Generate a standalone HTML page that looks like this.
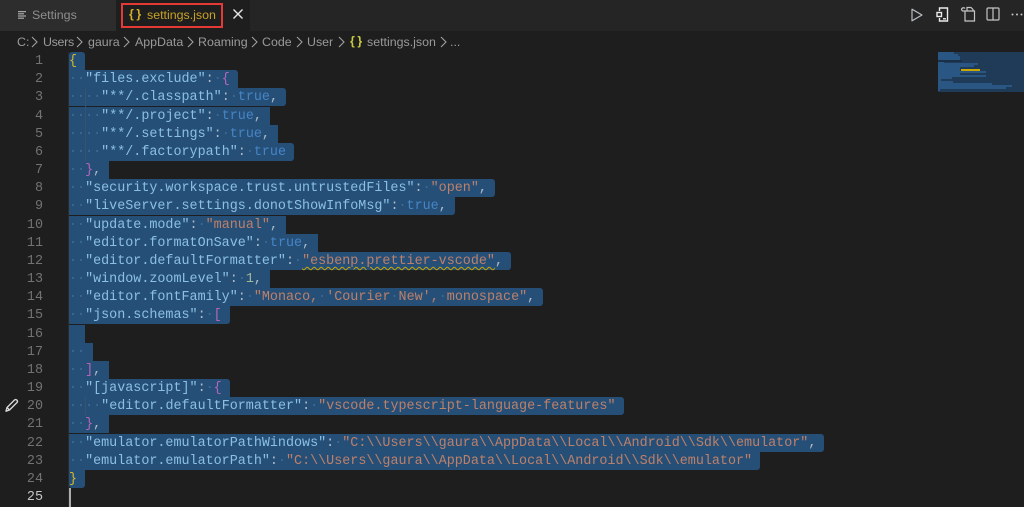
<!DOCTYPE html>
<html><head><meta charset="utf-8"><title>settings.json</title>
<style>
html,body{margin:0;padding:0;background:#1e1e1e}
#app{position:relative;width:1024px;height:507px;overflow:hidden;background:#1e1e1e;font-family:"Liberation Sans",sans-serif;filter:blur(.3px)}
.abs{position:absolute}
#bar{left:0;top:0;width:1024px;height:31px;background:#252526}
#t1{left:0;top:0;width:116px;height:31px;background:#2d2d2d}
#t2{left:116px;top:0;width:134px;height:31px;background:#1e1e1e}
#red{left:121px;top:3px;width:98px;height:21px;border:2px solid #e53935}
.tx{position:absolute;font-size:12.4px;line-height:16px;white-space:pre}
.bc{color:#9a9a9a;top:34px}
.n{position:absolute;left:20px;width:23px;text-align:right;color:#727272;font:13.4px/20px "Liberation Mono",monospace}
.l{position:absolute;left:69px;height:18.17px;font:13.4px/20px "Liberation Mono",monospace;white-space:pre}
.s{display:inline-block;height:100%;min-width:1ch;padding-right:1ch;background:#264f78;vertical-align:top;color:#d4d4d4}
.tr{border-top-right-radius:3px}.br{border-bottom-right-radius:3px}
.tl{border-top-left-radius:3px}.bl{border-bottom-left-radius:3px}
.k{color:#8ac0e2}.v{color:#bd8069}.b{color:#4585c6}.m{color:#a3b899}
.g{color:#d4b82a}.p{color:#b565b8}.d{color:#3f6a94}.c{color:#b0bcc8}
.w{text-decoration:underline wavy #cca700 1px;text-underline-offset:2px}
.guide{position:absolute;left:85px;width:1px;background:#365472}
.mm{position:absolute;left:938px;height:2px;background:#2a5683}
</style></head><body><div id="app">
<div class="abs" id="bar"></div><div class="abs" id="t1"></div><div class="abs" id="t2"></div>

<svg class="abs" style="left:17px;top:10px" width="10" height="10" viewBox="0 0 10 10" fill="#a8a8a8"><rect x="1" y="1" width="8" height="1.2"/><rect x="1" y="3.2" width="6" height="1.2"/><rect x="1" y="5.4" width="8" height="1.2"/><rect x="1" y="7.6" width="6" height="1.2"/></svg>
<div class="tx" style="left:32px;top:7px;color:#8f8f8f;font-size:12.4px">Settings</div>

<div class="abs" id="red"></div>
<div class="tx" style="left:129px;top:6px;color:#d4b02c;font-weight:bold;letter-spacing:2.5px">{}</div>
<div class="tx" style="left:147px;top:7px;color:#c9a227">settings.json</div>
<svg class="abs" style="left:232px;top:8px" width="12" height="12" viewBox="0 0 12 12" stroke="#e8e8e8" stroke-width="1.4" fill="none"><path d="M1.5 1.5L10.5 10.5M10.5 1.5L1.5 10.5"/></svg>

<svg class="abs" style="left:910px;top:7px" width="14" height="16" viewBox="0 0 14 16" fill="none" stroke="#b8bcc0" stroke-width="1.2"><path d="M2 2.2L12 8L2 13.8Z" stroke-linejoin="round"/></svg>
<svg class="abs" style="left:935px;top:6px" width="14" height="16" viewBox="0 0 14 16" fill="none" stroke="#ececec" stroke-width="1.4"><path d="M4.5 5V2H12.5V15H4.5V12"/><rect x="2" y="6.5" width="4.5" height="4"/><path d="M8 12.8H11"/></svg>
<svg class="abs" style="left:960px;top:6px" width="16" height="16" viewBox="0 0 16 16" fill="none" stroke="#c5c5c5" stroke-width="1.2"><path d="M5 5H14.5V15H5V5.5"/><path d="M5 5H3a2 2 0 0 1-1.5-1.5A2 2 0 0 1 5 2.5"/><path d="M7 5V1.5H11L13 3.5V5"/></svg>
<svg class="abs" style="left:986px;top:7px" width="14" height="14" viewBox="0 0 14 14" fill="none" stroke="#c5c5c5" stroke-width="1.2"><rect x="1" y="1" width="12" height="12" rx="1"/><path d="M7 1V13"/></svg>
<svg class="abs" style="left:1011px;top:13px" width="13" height="3" viewBox="0 0 13 3" fill="#c5c5c5"><circle cx="1.5" cy="1.5" r="1"/><circle cx="6" cy="1.5" r="1"/><circle cx="10.5" cy="1.5" r="1"/></svg>

<div class="tx bc" style="left:17px">C:</div>
<div class="tx bc" style="left:43px;letter-spacing:-.3px">Users</div>
<div class="tx bc" style="left:88px">gaura</div>
<div class="tx bc" style="left:135px">AppData</div>
<div class="tx bc" style="left:198px">Roaming</div>
<div class="tx bc" style="left:262px">Code</div>
<div class="tx bc" style="left:307px">User</div>
<div class="tx" style="left:350px;top:33px;color:#cbcb41;font-weight:bold;letter-spacing:2.5px">{}</div>
<div class="tx bc" style="left:367px">settings.json</div>
<div class="tx bc" style="left:450px">...</div>
<svg class="abs" style="left:0;top:0" width="500" height="50" fill="none" stroke="#a0a0a0" stroke-width="1.1"><path d="M32 37L37 42L32 47M77 37L82 42L77 47M124 37L129 42L124 47M188 37L193 42L188 47M252 37L257 42L252 47M297 37L302 42L297 47M339 37L344 42L339 47M441 37L446 42L441 47"/></svg>

<div class="abs" style="left:68px;top:52px;width:1px;height:455px;background:#2b2b2b"></div>

<div class="n" style="top:52px">1</div><div class="n" style="top:70px">2</div><div class="n" style="top:88px">3</div><div class="n" style="top:107px">4</div><div class="n" style="top:125px">5</div><div class="n" style="top:143px">6</div><div class="n" style="top:161px">7</div><div class="n" style="top:179px">8</div><div class="n" style="top:197px">9</div><div class="n" style="top:216px">10</div><div class="n" style="top:234px">11</div><div class="n" style="top:252px">12</div><div class="n" style="top:270px">13</div><div class="n" style="top:288px">14</div><div class="n" style="top:306px">15</div><div class="n" style="top:325px">16</div><div class="n" style="top:343px">17</div><div class="n" style="top:361px">18</div><div class="n" style="top:379px">19</div><div class="n" style="top:397px">20</div><div class="n" style="top:415px">21</div><div class="n" style="top:434px">22</div><div class="n" style="top:452px">23</div><div class="n" style="top:470px">24</div><div class="n" style="top:488px;color:#c6c6c6">25</div>

<svg class="abs" style="left:4px;top:398px" width="15" height="15" viewBox="0 0 15 15" fill="none" stroke="#d8d8d8" stroke-width="1.4"><path d="M2 13.2L3 9.5L10.5 2Q11.8 1 13 2.2Q14 3.4 13 4.5L5.5 12Z" stroke-linejoin="round"/><path d="M3 9.5L5.5 12"/></svg>

<div class="l" style="top:52px"><span class="s tl tr"><span class="g">{</span></span></div>
<div class="l" style="top:70px"><span class="s tr"><span class="d">··</span><span class="k">"files.exclude"</span><span class="c">:</span><span class="d">·</span><span class="p">{</span></span></div>
<div class="l" style="top:88px"><span class="s tr br"><span class="d">····</span><span class="k">"**/.classpath"</span><span class="c">:</span><span class="d">·</span><span class="b">true</span><span class="c">,</span></span></div>
<div class="l" style="top:107px"><span class="s"><span class="d">····</span><span class="k">"**/.project"</span><span class="c">:</span><span class="d">·</span><span class="b">true</span><span class="c">,</span></span></div>
<div class="l" style="top:125px"><span class="s"><span class="d">····</span><span class="k">"**/.settings"</span><span class="c">:</span><span class="d">·</span><span class="b">true</span><span class="c">,</span></span></div>
<div class="l" style="top:143px"><span class="s tr br"><span class="d">····</span><span class="k">"**/.factorypath"</span><span class="c">:</span><span class="d">·</span><span class="b">true</span></span></div>
<div class="l" style="top:161px"><span class="s"><span class="d">··</span><span class="p">}</span><span class="c">,</span></span></div>
<div class="l" style="top:179px"><span class="s tr br"><span class="d">··</span><span class="k">"security.workspace.trust.untrustedFiles"</span><span class="c">:</span><span class="d">·</span><span class="v">"open"</span><span class="c">,</span></span></div>
<div class="l" style="top:197px"><span class="s br"><span class="d">··</span><span class="k">"liveServer.settings.donotShowInfoMsg"</span><span class="c">:</span><span class="d">·</span><span class="b">true</span><span class="c">,</span></span></div>
<div class="l" style="top:216px"><span class="s"><span class="d">··</span><span class="k">"update.mode"</span><span class="c">:</span><span class="d">·</span><span class="v">"manual"</span><span class="c">,</span></span></div>
<div class="l" style="top:234px"><span class="s"><span class="d">··</span><span class="k">"editor.formatOnSave"</span><span class="c">:</span><span class="d">·</span><span class="b">true</span><span class="c">,</span></span></div>
<div class="l" style="top:252px"><span class="s tr br"><span class="d">··</span><span class="k">"editor.defaultFormatter"</span><span class="c">:</span><span class="d">·</span><span class="v w">"esbenp.prettier-vscode"</span><span class="c">,</span></span></div>
<div class="l" style="top:270px"><span class="s"><span class="d">··</span><span class="k">"window.zoomLevel"</span><span class="c">:</span><span class="d">·</span><span class="m">1</span><span class="c">,</span></span></div>
<div class="l" style="top:288px"><span class="s tr br"><span class="d">··</span><span class="k">"editor.fontFamily"</span><span class="c">:</span><span class="d">·</span><span class="v">"Monaco,<span class="d">·</span>'Courier<span class="d">·</span>New',<span class="d">·</span>monospace"</span><span class="c">,</span></span></div>
<div class="l" style="top:306px"><span class="s br"><span class="d">··</span><span class="k">"json.schemas"</span><span class="c">:</span><span class="d">·</span><span class="p">[</span></span></div>
<div class="l" style="top:325px"><span class="s"></span></div>
<div class="l" style="top:343px"><span class="s"><span class="d">··</span></span></div>
<div class="l" style="top:361px"><span class="s"><span class="d">··</span><span class="p">]</span><span class="c">,</span></span></div>
<div class="l" style="top:379px"><span class="s tr"><span class="d">··</span><span class="k">"[javascript]"</span><span class="c">:</span><span class="d">·</span><span class="p">{</span></span></div>
<div class="l" style="top:397px"><span class="s tr br"><span class="d">····</span><span class="k">"editor.defaultFormatter"</span><span class="c">:</span><span class="d">·</span><span class="v">"vscode.typescript-language-features"</span></span></div>
<div class="l" style="top:415px"><span class="s"><span class="d">··</span><span class="p">}</span><span class="c">,</span></span></div>
<div class="l" style="top:434px"><span class="s tr br"><span class="d">··</span><span class="k">"emulator.emulatorPathWindows"</span><span class="c">:</span><span class="d">·</span><span class="v">"C:\\Users\\gaura\\AppData\\Local\\Android\\Sdk\\emulator"</span><span class="c">,</span></span></div>
<div class="l" style="top:452px"><span class="s br"><span class="d">··</span><span class="k">"emulator.emulatorPath"</span><span class="c">:</span><span class="d">·</span><span class="v">"C:\\Users\\gaura\\AppData\\Local\\Android\\Sdk\\emulator"</span></span></div>
<div class="l" style="top:470px"><span class="s br bl"><span class="g">}</span></span></div>

<div class="guide" style="top:88px;height:73px"></div>
<div class="guide" style="top:397px;height:18px"></div>
<div class="abs" style="left:69px;top:488px;width:2px;height:19px;background:#aeafad"></div>

<div class="abs" style="left:938px;top:52px;width:86px;height:40px;background:#1f3b58"></div>
<div class="mm" style="top:52px;width:16px"></div>
<div class="mm" style="top:54px;width:20px"></div>
<div class="mm" style="top:56px;width:22px"></div>
<div class="mm" style="top:58px;width:22px"></div>
<div class="mm" style="top:60px;width:24px;background:#1b3047"></div>
<div class="mm" style="top:62px;width:6px"></div>
<div class="mm" style="top:63px;width:40px"></div>
<div class="mm" style="top:65px;width:36px"></div>
<div class="mm" style="top:67px;width:22px"></div>
<div class="mm" style="top:69px;width:22px"></div>
<div class="mm" style="top:71px;width:48px"></div>
<div class="mm" style="top:73px;width:22px"></div>
<div class="mm" style="top:75px;width:48px"></div>
<div class="mm" style="top:77px;width:14px"></div>
<div class="mm" style="top:79px;width:3px"></div>
<div class="mm" style="top:81px;width:15px"></div>
<div class="mm" style="top:83px;width:54px"></div>
<div class="mm" style="top:85px;width:74px"></div>
<div class="mm" style="top:87px;width:68px"></div>
<div class="mm" style="top:89px;width:2px"></div>
<div class="abs" style="left:961px;top:69px;width:19px;height:2px;background:#cca700"></div>
</div></body></html>
